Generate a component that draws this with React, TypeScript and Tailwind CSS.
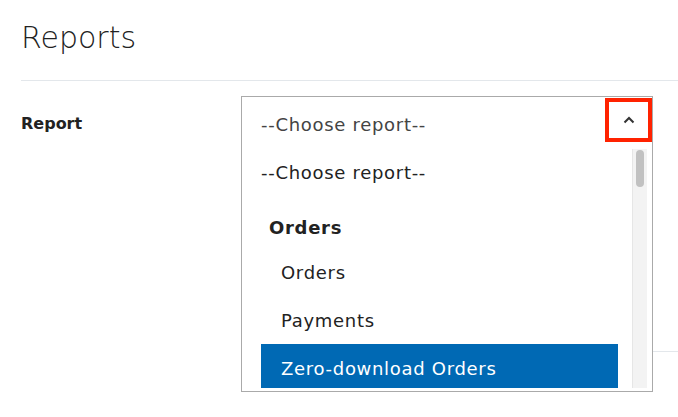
export default function App() {
  const font = { fontFamily: '"DejaVu Sans", "Open Sans", sans-serif' };
  return (
    <div className="min-h-[417px] bg-white pl-[21px] pt-[16px] text-[#222]" style={font}>
      <h1 className="text-[30px] font-extralight leading-[44px] text-[#222]">Reports</h1>
      <div className="mt-[20px] border-t border-[#e3e7eb]" />

      <div className="mt-[15px] flex">
        <div className="w-[220px] pt-[16px] text-[16px] font-bold text-[#222]">Report</div>

        <div className="flex-1 h-[256px] border-b border-[#e3e7eb]">
          <div className="relative w-[412px]">
            {/* select header */}
            <div className="h-[53px] border border-b-0 border-[#aaaaaa] pl-[19px] pt-[3px] flex items-center text-[18px] tracking-[0.7px] text-[#444]">
              --Choose report--
            </div>
            <div className="absolute right-[1px] top-[2px] w-[47px] h-[44px] border-[4px] border-[#ff2200] flex items-center justify-center">
              <svg width="12" height="8" viewBox="0 0 12 8" className="-mt-[1px]">
                <polyline points="1.5,6.5 6,2 10.5,6.5" fill="none" stroke="#333" strokeWidth="2" />
              </svg>
            </div>

            {/* open dropdown list */}
            <div className="absolute left-0 top-[53px] w-[412px] bg-white border border-t-0 border-[#aaaaaa] pb-[3px] pr-[5px] flex">
              <div className="flex-1 h-[239px] overflow-hidden pl-[19px] pr-[14px] text-[18px] tracking-[0.7px] text-[#222]">
                <div className="h-[47px] flex items-center">--Choose report--</div>
                <div className="h-[52px] pt-[10px] pl-[8px] flex items-center font-bold">Orders</div>
                <div className="h-[48px] pl-[20px] flex items-center">Orders</div>
                <div className="h-[48px] pl-[20px] flex items-center">Payments</div>
                <div className="h-[48px] pl-[20px] flex items-center bg-[#0069b4] text-white">Zero-download Orders</div>
              </div>
              <div className="w-[15px] h-[239px] bg-[#f3f3f3] border-l border-[#e6e6e6] pt-[1px] pl-[3px]">
                <div className="w-[8px] h-[37px] rounded-full bg-[#c1c1c1]" />
              </div>
            </div>
          </div>
        </div>
      </div>
    </div>
  );
}
